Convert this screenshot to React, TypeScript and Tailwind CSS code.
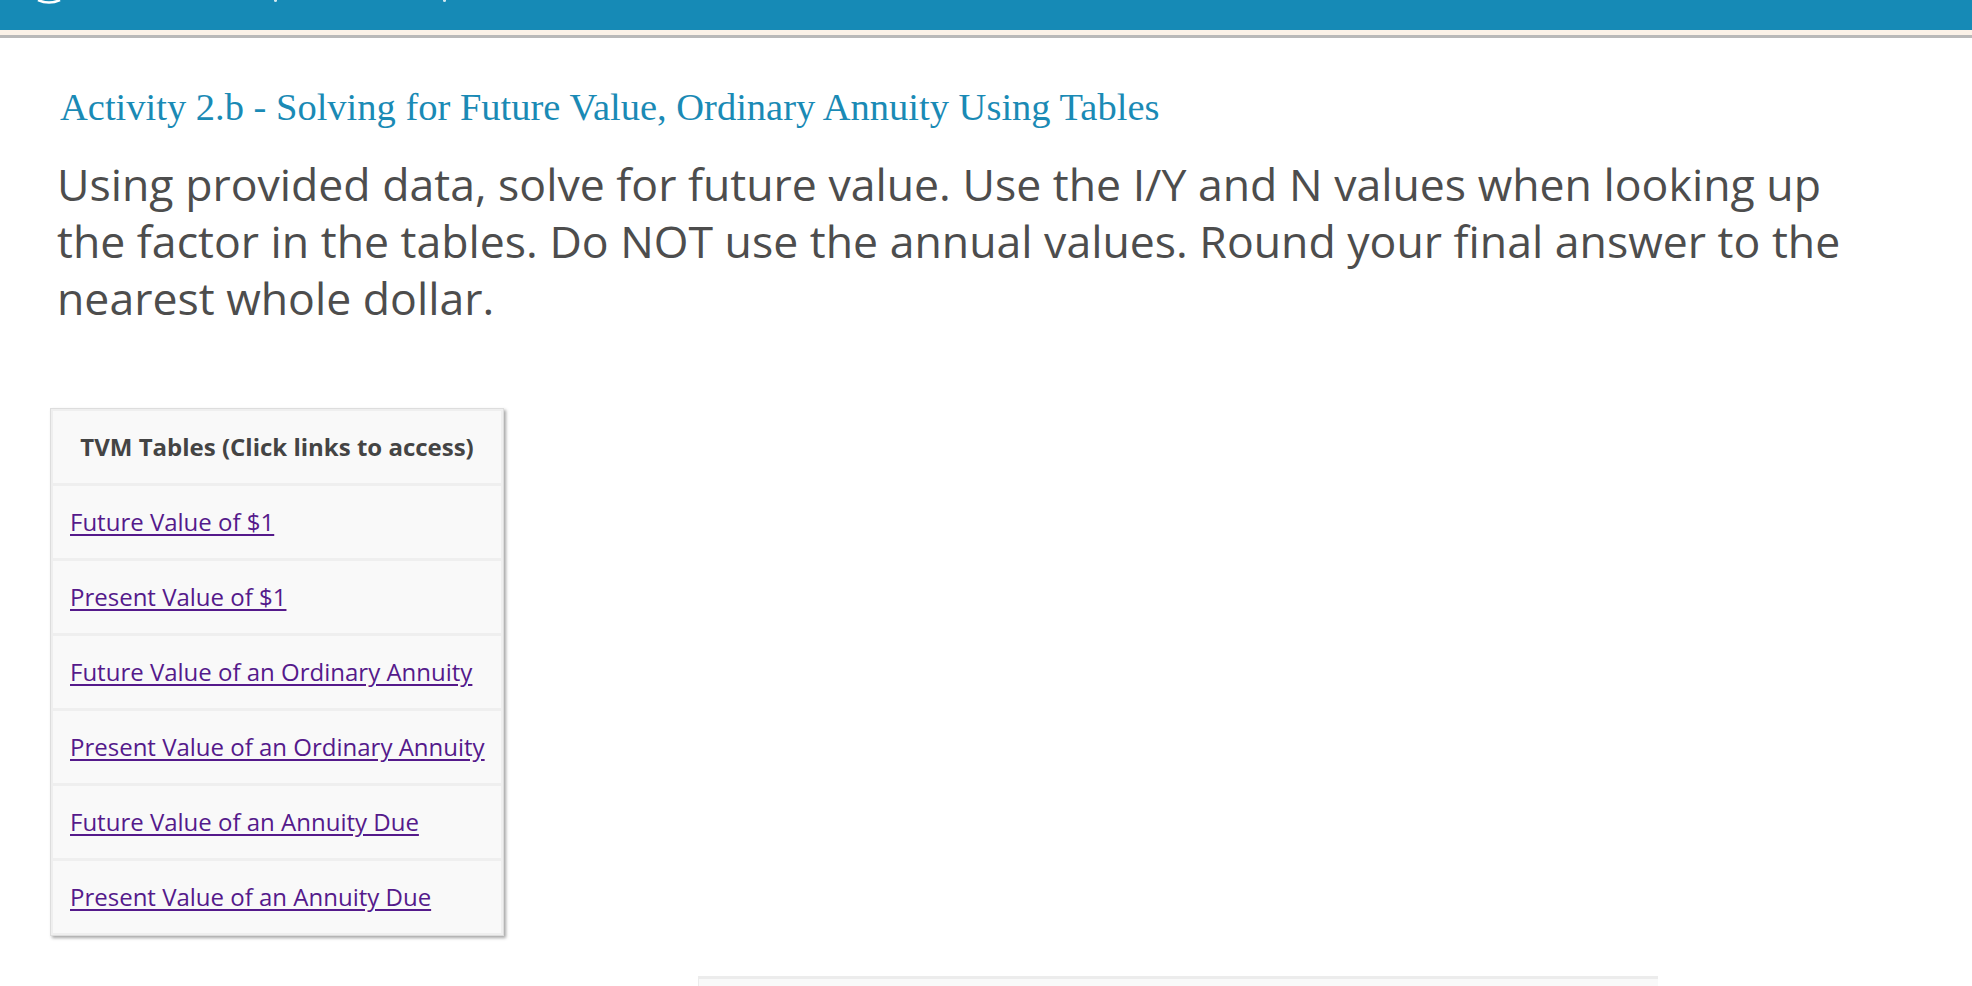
import React from 'react';

const tables = [
  'Future Value of $1',
  'Present Value of $1',
  'Future Value of an Ordinary Annuity',
  'Present Value of an Ordinary Annuity',
  'Future Value of an Annuity Due',
  'Present Value of an Annuity Due',
];

const App = () => {
  return (
    <div className="min-h-screen bg-white font-['Open_Sans',sans-serif] overflow-hidden">
      {/* top banner, only the bottom edge is visible */}
      <header>
        <div className="relative h-[30px] bg-[#168ab6]">
          <svg className="absolute left-[36px] top-0" width="26" height="4" viewBox="0 0 26 4">
            <path d="M2 0 Q13 5 24 0" stroke="#fff" strokeWidth="2.5" fill="none" />
          </svg>
          <span className="absolute left-[274px] top-0 h-[2px] w-[3px] bg-white/80 rounded-b" />
          <span className="absolute left-[443px] top-0 h-[2px] w-[3px] bg-white/80 rounded-b" />
        </div>
        <div className="h-[5px] bg-[#fbf2e8]" />
        <div className="h-[3px] bg-[#b9b9b9]" />
      </header>

      <main className="pl-[50px] pr-[100px]">
        <h2 className="mt-[47px] pl-[10px] font-['Liberation_Serif',serif] text-[38.5px] leading-[44px] text-[#1a8ab5] font-normal">
          Activity 2.b - Solving for Future Value, Ordinary Annuity Using Tables
        </h2>

        <p className="mt-[26px] pl-[7px] text-[44.6px] leading-[57px] text-[#4d4d4d]">
          Using provided data, solve for future value. Use the I/Y and N values when looking up the factor in the tables. Do NOT use the annual values. Round your final answer to the nearest whole dollar.
        </p>

        <div className="mt-[82px] w-[454px] border border-[#dddddd] bg-[#efefef] p-[2px] flex flex-col gap-[3px] shadow-[2px_2px_3px_rgba(0,0,0,0.35)]">
          <div className="h-[72px] bg-[#f9f9f9] flex items-center justify-center text-[24px] font-bold text-[#444444]">
            TVM Tables (Click links to access)
          </div>
          {tables.map((t) => (
            <div key={t} className="h-[72px] bg-[#f9f9f9] flex items-center pl-[17px]">
              <a href="#" className="text-[24px] text-[#551a8b] underline underline-offset-[3px]">
                {t}
              </a>
            </div>
          ))}
        </div>

        <div className="mt-[40px] ml-[648px] w-[960px] h-[40px] border-l border-t-[3px] border-[#ececec] bg-[#f9f9f9]" />
      </main>
    </div>
  );
};

export default App;
